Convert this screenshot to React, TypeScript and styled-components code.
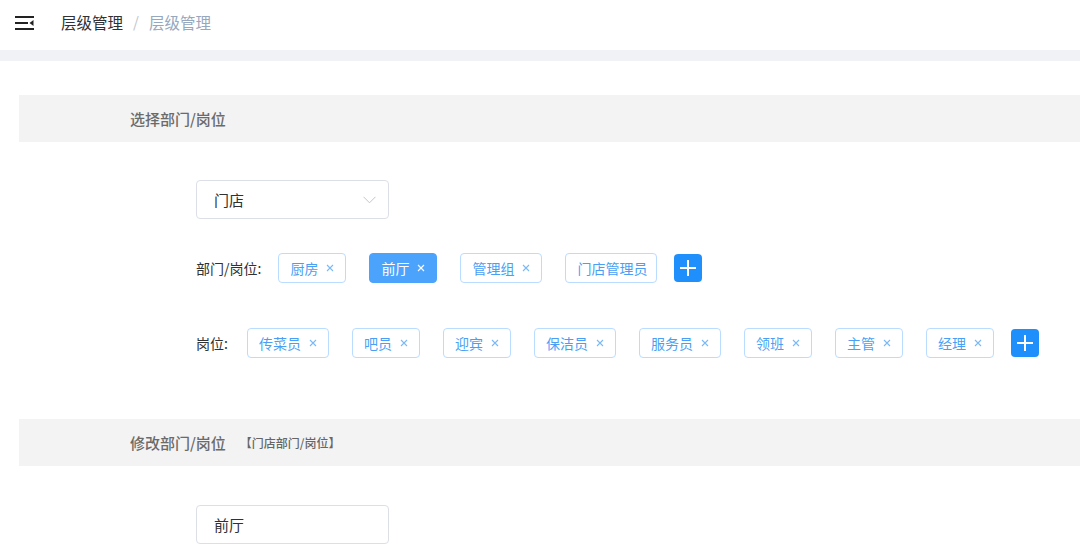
import React from "react";
import styled, { createGlobalStyle } from "styled-components";

const Global = createGlobalStyle`
  html, body { margin: 0; padding: 0; background: #fff; }
  body { font-family: "Noto Sans CJK SC", "Noto Sans", sans-serif; }
`;

const Page = styled.div`
  width: 1080px;
  height: 559px;
  overflow: hidden;
  display: flex;
  flex-direction: column;
`;

const Header = styled.div`
  height: 50px;
  display: flex;
  align-items: center;
  padding: 0 0 7px 15px;
  box-sizing: border-box;
`;

const MenuIcon = styled.svg`
  width: 19px;
  height: 16px;
  margin-right: 27px;
  margin-top: 2px;
`;

const Crumb = styled.span<{ $muted?: boolean }>`
  font-size: 15.5px;
  color: ${(p) => (p.$muted ? "#97a8be" : "#303133")};
`;

const Sep = styled.span`
  font-size: 15px;
  color: #c0c4cc;
  margin: 0 10px;
`;

const Strip = styled.div`
  height: 11px;
  background: #f0f2f5;
`;

const Content = styled.div`
  padding-left: 19px;
  display: flex;
  flex-direction: column;
`;

const Band = styled.div<{ $top: number }>`
  margin-top: ${(p) => p.$top}px;
  height: 47px;
  background: #f3f3f3;
  display: flex;
  align-items: center;
  padding-left: 111px;
`;

const BandTitle = styled.span`
  font-size: 15px;
  font-weight: 500;
  color: #6a6a6a;
`;

const BandSub = styled.span`
  font-size: 12px;
  color: #666;
  margin-left: 14px;
  font-weight: 500;
`;

const Form = styled.div`
  padding-left: 177px;
  display: flex;
  flex-direction: column;
`;

const Field = styled.div<{ $top: number }>`
  margin-top: ${(p) => p.$top}px;
  width: 193px;
  height: 39px;
  box-sizing: border-box;
  border: 1px solid #dcdfe6;
  border-radius: 4px;
  display: flex;
  align-items: center;
  justify-content: space-between;
  padding: 0 12px 0 17px;
  font-size: 15px;
  color: #303133;
`;

const Chevron = styled.svg`
  width: 13px;
  height: 8px;
`;

const Row = styled.div<{ $top: number }>`
  margin-top: ${(p) => p.$top}px;
  display: flex;
  align-items: center;
  gap: 23px;
`;

const Label = styled.span<{ $shift: number }>`
  font-size: 14px;
  color: #303133;
  margin-right: ${(p) => p.$shift}px;
`;

const Tag = styled.span<{ $active?: boolean; $closable?: boolean }>`
  height: 30px;
  box-sizing: border-box;
  display: inline-flex;
  align-items: center;
  padding: 0 ${(p) => (p.$closable ? 11 : 9)}px 0 11px;
  border-radius: 4px;
  font-size: 14px;
  border: 1px solid ${(p) => (p.$active ? "#4ba3fb" : "#b9dcff")};
  background: ${(p) => (p.$active ? "#4ba3fb" : "#fff")};
  color: ${(p) => (p.$active ? "#fff" : "#4a9ff5")};
`;

const Close = styled.svg`
  width: 8px;
  height: 8px;
  margin-left: 8px;
`;

const AddBtn = styled.span`
  width: 28px;
  height: 28px;
  border-radius: 4px;
  background: #1f8ffb;
  display: inline-flex;
  align-items: center;
  justify-content: center;
  margin-left: -6px;
`;

const TagItem = ({ text, active, closable = true }: { text: string; active?: boolean; closable?: boolean }) => (
  <Tag $active={active} $closable={closable}>
    {text}
    {closable && (
      <Close viewBox="0 0 8 8">
        <path d="M1 1L7 7M7 1L1 7" stroke={active ? "#fff" : "#7ab9f7"} strokeWidth="1.1" />
      </Close>
    )}
  </Tag>
);

const Plus = () => (
  <AddBtn>
    <svg width="18" height="18" viewBox="0 0 18 18">
      <path d="M9 1V17M1 9H17" stroke="#fff" strokeWidth="2" />
    </svg>
  </AddBtn>
);

export default function App() {
  const depts = ["厨房", "前厅", "管理组"];
  const posts = ["传菜员", "吧员", "迎宾", "保洁员", "服务员", "领班", "主管", "经理"];
  return (
    <Page>
      <Global />
      <Header>
        <MenuIcon viewBox="0 0 19 16">
          <rect x="0" y="1" width="19" height="2" fill="#222" />
          <rect x="0" y="7" width="13" height="2" fill="#222" />
          <path d="M14.5 8L18.5 5V11Z" fill="#222" />
          <rect x="0" y="13" width="19" height="2" fill="#222" />
        </MenuIcon>
        <Crumb>层级管理</Crumb>
        <Sep>/</Sep>
        <Crumb $muted>层级管理</Crumb>
      </Header>
      <Strip />
      <Content>
        <Band $top={34}>
          <BandTitle>选择部门/岗位</BandTitle>
        </Band>
        <Form>
          <Field $top={38}>
            门店
            <Chevron viewBox="0 0 13 8">
              <path d="M0.5 0.8L6.5 6.8L12.5 0.8" stroke="#c0c4cc" strokeWidth="1" fill="none" />
            </Chevron>
          </Field>
          <Row $top={34}>
            <Label $shift={-6}>部门/岗位:</Label>
            {depts.map((d) => (
              <TagItem key={d} text={d} active={d === "前厅"} />
            ))}
            <TagItem text="门店管理员" closable={false} />
            <Plus />
          </Row>
          <Row $top={45}>
            <Label $shift={-4}>岗位:</Label>
            {posts.map((d) => (
              <TagItem key={d} text={d} />
            ))}
            <Plus />
          </Row>
        </Form>
        <Band $top={61}>
          <BandTitle>修改部门/岗位</BandTitle>
          <BandSub>【门店部门/岗位】</BandSub>
        </Band>
        <Form>
          <Field $top={39}>前厅</Field>
        </Form>
      </Content>
    </Page>
  );
}
